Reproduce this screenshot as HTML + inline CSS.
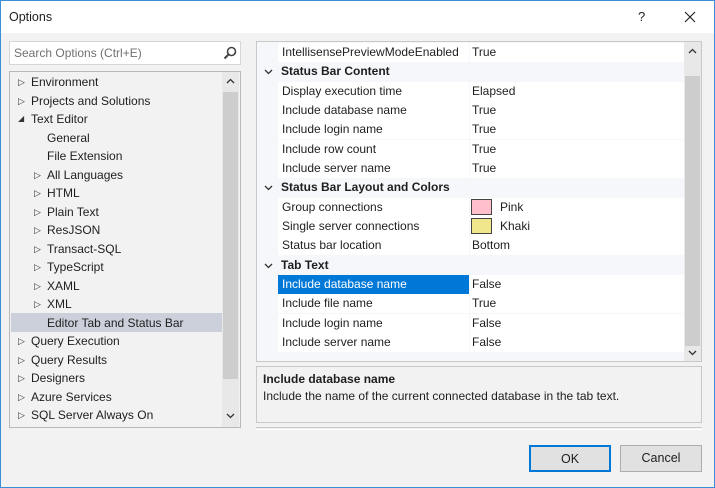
<!DOCTYPE html>
<html><head><meta charset="utf-8"><style>
*{box-sizing:border-box;margin:0;padding:0}
body{width:715px;height:488px;overflow:hidden;font-family:"Liberation Sans",sans-serif;font-size:12px;color:#1e1e1e;background:#f2f2f2;position:relative}
.win{position:absolute;left:0;top:0;width:715px;height:488px;border:1px solid #3c8ddb;background:#f2f2f2}
.title{position:absolute;left:0;top:0;width:713px;height:32px;background:#fff}
.title .t{position:absolute;left:8px;top:9px;font-size:12.5px}
.ab{position:absolute}
.search{position:absolute;left:8px;top:40px;width:232px;height:24px;border:1px solid #d6d6d6;background:#fff;color:#717171;padding:4px 0 0 4px}
.tree{position:absolute;left:8px;top:70px;width:232px;height:357px;border:1px solid #b8b8b8;background:#f2f2f2}
.ti{position:absolute;height:18.5px;line-height:18.5px;white-space:nowrap}
.arr{position:absolute;font-size:9px;color:#333}
.grid{position:absolute;left:255px;top:40px;width:446px;height:321px;border:1px solid #c8c8c8;background:#f5f7fb}
.r{position:absolute;left:0;height:19px;line-height:19px;width:427px}
.n{position:absolute;left:21px;width:191px;height:19px;background:#fff;padding-left:4px;white-space:nowrap}
.v{position:absolute;left:213px;width:214px;height:19px;background:#fff;padding-left:2px}
.cat{font-weight:bold;padding-left:24px}
.chev{position:absolute;left:7px;top:7px}
.sw{display:inline-block;width:21px;height:16px;border:1px solid #444;vertical-align:middle;margin:0 8px 2px -1px}
.desc{position:absolute;left:255px;top:365px;width:446px;height:57px;border:1px solid #c8c8c8;background:#f2f2f2;padding:5px 6px}
.btn{position:absolute;top:444px;width:82px;height:27px;border:1px solid #adadad;background:#e1e1e1;text-align:center;line-height:25px;font-size:12.5px}
</style></head><body><div class="win">
<div class="title"><span class="t">Options</span>
<span class="ab" style="left:637px;top:8px;font-size:13px">?</span>
<svg class="ab" style="left:683px;top:10px" width="12" height="12"><path d="M1 1L11 11M11 1L1 11" stroke="#222" stroke-width="1.2"/></svg></div>
<div class="search">Search Options (Ctrl+E)
<svg class="ab" style="left:213px;top:4px" width="14" height="14"><circle cx="8.5" cy="5.5" r="4" fill="none" stroke="#444" stroke-width="1.6"/><path d="M5.5 8.5L1.5 12.5" stroke="#444" stroke-width="2"/></svg></div>
<div class="tree">
<div class="ab" style="left:212px;top:0;width:17px;height:355px;background:#e8e8e8"></div>
<div class="ab" style="left:213px;top:20px;width:15px;height:287px;background:#cdcdcd"></div>
<svg class="ab" style="left:216px;top:6px" width="9" height="6"><path d="M1 5L4.5 1.5L8 5" stroke="#333" fill="none" stroke-width="1.3"/></svg>
<svg class="ab" style="left:216px;top:341px" width="9" height="6"><path d="M1 1L4.5 4.5L8 1" stroke="#333" fill="none" stroke-width="1.3"/></svg>
<div class="ab" style="left:1px;top:241px;width:211px;height:19px;background:#cbd0da"></div>
<div class="ti" style="left:21px;top:1px">Environment</div><span class="arr" style="left:8px;top:5px">▷</span>
<div class="ti" style="left:21px;top:20px">Projects and Solutions</div><span class="arr" style="left:8px;top:24px">▷</span>
<div class="ti" style="left:21px;top:38px">Text Editor</div><span class="arr" style="left:8px;top:42px;font-size:8px">◢</span>
<div class="ti" style="left:37px;top:57px">General</div>
<div class="ti" style="left:37px;top:75px">File Extension</div>
<div class="ti" style="left:37px;top:94px">All Languages</div><span class="arr" style="left:24px;top:98px">▷</span>
<div class="ti" style="left:37px;top:112px">HTML</div><span class="arr" style="left:24px;top:116px">▷</span>
<div class="ti" style="left:37px;top:131px">Plain Text</div><span class="arr" style="left:24px;top:135px">▷</span>
<div class="ti" style="left:37px;top:149px">ResJSON</div><span class="arr" style="left:24px;top:153px">▷</span>
<div class="ti" style="left:37px;top:168px">Transact-SQL</div><span class="arr" style="left:24px;top:172px">▷</span>
<div class="ti" style="left:37px;top:186px">TypeScript</div><span class="arr" style="left:24px;top:190px">▷</span>
<div class="ti" style="left:37px;top:205px">XAML</div><span class="arr" style="left:24px;top:209px">▷</span>
<div class="ti" style="left:37px;top:223px">XML</div><span class="arr" style="left:24px;top:227px">▷</span>
<div class="ti" style="left:37px;top:242px">Editor Tab and Status Bar</div>
<div class="ti" style="left:21px;top:260px">Query Execution</div><span class="arr" style="left:8px;top:264px">▷</span>
<div class="ti" style="left:21px;top:279px">Query Results</div><span class="arr" style="left:8px;top:283px">▷</span>
<div class="ti" style="left:21px;top:297px">Designers</div><span class="arr" style="left:8px;top:301px">▷</span>
<div class="ti" style="left:21px;top:316px">Azure Services</div><span class="arr" style="left:8px;top:320px">▷</span>
<div class="ti" style="left:21px;top:334px">SQL Server Always On</div><span class="arr" style="left:8px;top:338px">▷</span>
</div>
<div class="grid">
<div class="ab" style="left:427px;top:0;width:17px;height:319px;background:#e8e8e8"></div>
<div class="ab" style="left:428px;top:34px;width:15px;height:270px;background:#cdcdcd"></div>
<svg class="ab" style="left:431px;top:6px" width="9" height="6"><path d="M1 5L4.5 1.5L8 5" stroke="#333" fill="none" stroke-width="1.3"/></svg>
<svg class="ab" style="left:431px;top:308px" width="9" height="6"><path d="M1 1L4.5 4.5L8 1" stroke="#333" fill="none" stroke-width="1.3"/></svg>
<div class="r" style="top:1px"><div class="n">IntellisensePreviewModeEnabled</div><div class="v">True</div></div>
<div class="r cat" style="top:20.3px"><svg class="chev" width="9" height="6"><path d="M1 1L4.5 4.5L8 1" stroke="#333" fill="none" stroke-width="1.3"/></svg>Status Bar Content</div>
<div class="r" style="top:39.7px"><div class="n">Display execution time</div><div class="v">Elapsed</div></div>
<div class="r" style="top:59px"><div class="n">Include database name</div><div class="v">True</div></div>
<div class="r" style="top:78.3px"><div class="n">Include login name</div><div class="v">True</div></div>
<div class="r" style="top:97.7px"><div class="n">Include row count</div><div class="v">True</div></div>
<div class="r" style="top:117px"><div class="n">Include server name</div><div class="v">True</div></div>
<div class="r cat" style="top:136.3px"><svg class="chev" width="9" height="6"><path d="M1 1L4.5 4.5L8 1" stroke="#333" fill="none" stroke-width="1.3"/></svg>Status Bar Layout and Colors</div>
<div class="r" style="top:155.7px"><div class="n">Group connections</div><div class="v"><span class="sw" style="background:#ffc0cb"></span>Pink</div></div>
<div class="r" style="top:175px"><div class="n">Single server connections</div><div class="v"><span class="sw" style="background:#f0e68c"></span>Khaki</div></div>
<div class="r" style="top:194.3px"><div class="n">Status bar location</div><div class="v">Bottom</div></div>
<div class="r cat" style="top:213.7px"><svg class="chev" width="9" height="6"><path d="M1 1L4.5 4.5L8 1" stroke="#333" fill="none" stroke-width="1.3"/></svg>Tab Text</div>
<div class="r" style="top:233px"><div class="n" style="background:#0078d7;color:#fff">Include database name</div><div class="v">False</div></div>
<div class="r" style="top:252.3px"><div class="n">Include file name</div><div class="v">True</div></div>
<div class="r" style="top:271.7px"><div class="n">Include login name</div><div class="v">False</div></div>
<div class="r" style="top:291px"><div class="n">Include server name</div><div class="v">False</div></div>
</div>
<div class="desc"><div style="font-weight:bold">Include database name</div><div style="margin-top:3px">Include the name of the current connected database in the tab text.</div></div>
<div class="ab" style="left:255px;top:426px;width:446px;height:3px;border-top:1px solid #c8c8c8;border-bottom:1px solid #fff"></div>
<div class="btn" style="left:528px;border:2px solid #0078d7">OK</div>
<div class="btn" style="left:619px">Cancel</div>
</div></body></html>
